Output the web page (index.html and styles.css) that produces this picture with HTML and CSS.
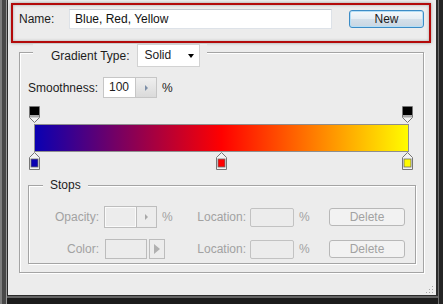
FILE: index.html
```html
<!DOCTYPE html>
<html lang="en">
<head>
    <meta charset="UTF-8">
    <title>Gradient Editor</title>
    <link rel="stylesheet" href="styles.css">
</head>
<body>
    <div class="window">
        <div class="panel">
            <div class="namebar">
                <label class="name-label" for="gradName">Name:</label>
                <input class="name-input" id="gradName" type="text" value="Blue, Red, Yellow">
                <button type="button" class="btn-new">New</button>
            </div>

            <div class="group gradient-group">
                <div class="legend type-legend">
                    <span>Gradient Type:</span>
                    <div class="select">Solid<span class="caret"></span></div>
                </div>

                <div class="smooth-row">
                    <span class="smooth-label">Smoothness:</span>
                    <div class="spin">
                        <span class="spin-value">100</span>
                        <span class="spin-btn"><span class="tri-small"></span></span>
                    </div>
                    <span class="pct">%</span>
                </div>

                <div class="editor">
                    <div class="track">
                        <svg class="marker" style="left: calc(0% - 5px)" width="11" height="18" viewBox="0 0 11 18">
                            <path d="M0.5 0.5 H10.5 V11.5 L5.5 16.5 L0.5 11.5 Z" fill="#f4f4f4" stroke="#767676"/>
                            <rect x="1" y="1" width="9" height="8" fill="#000"/>
                            <rect x="1" y="9" width="9" height="2.5" fill="#a9a9a9"/>
                        </svg>
                        <svg class="marker" style="left: calc(100% - 6px)" width="11" height="18" viewBox="0 0 11 18">
                            <path d="M0.5 0.5 H10.5 V11.5 L5.5 16.5 L0.5 11.5 Z" fill="#f4f4f4" stroke="#767676"/>
                            <rect x="1" y="1" width="9" height="8" fill="#000"/>
                            <rect x="1" y="9" width="9" height="2.5" fill="#a9a9a9"/>
                        </svg>
                    </div>
                    <div class="bar"></div>
                    <div class="track">
                        <svg class="marker" style="left: calc(0% - 5px)" width="11" height="18" viewBox="0 0 11 18">
                            <path d="M5.5 0.5 L10.5 5.5 V17.5 H0.5 V5.5 Z" fill="#f2f2f2" stroke="#767676"/>
                            <rect x="2" y="7" width="7" height="8" fill="#0a00b2" stroke="#6a6a6a" stroke-width="0.8"/>
                        </svg>
                        <svg class="marker" style="left: calc(50% - 5px)" width="11" height="18" viewBox="0 0 11 18">
                            <path d="M5.5 0.5 L10.5 5.5 V17.5 H0.5 V5.5 Z" fill="#f2f2f2" stroke="#767676"/>
                            <rect x="2" y="7" width="7" height="8" fill="#ff0000" stroke="#6a6a6a" stroke-width="0.8"/>
                        </svg>
                        <svg class="marker" style="left: calc(100% - 6px)" width="11" height="18" viewBox="0 0 11 18">
                            <path d="M5.5 0.5 L10.5 5.5 V17.5 H0.5 V5.5 Z" fill="#f2f2f2" stroke="#767676"/>
                            <rect x="2" y="7" width="7" height="8" fill="#fffc00" stroke="#6a6a6a" stroke-width="0.8"/>
                        </svg>
                    </div>
                </div>

                <div class="group stops-group">
                    <div class="legend stops-legend">Stops</div>

                    <div class="stop-row">
                        <span class="field-label">Opacity:</span>
                        <div class="spin disabled">
                            <span class="spin-value"></span>
                            <span class="spin-btn"><span class="tri-small"></span></span>
                        </div>
                        <span class="pct">%</span>
                        <span class="loc-label">Location:</span>
                        <span class="loc-input"></span>
                        <span class="pct loc-pct">%</span>
                        <button type="button" class="btn-delete" disabled>Delete</button>
                    </div>

                    <div class="stop-row color-row">
                        <span class="field-label">Color:</span>
                        <span class="swatch"></span>
                        <span class="swatch-btn"><span class="tri-big"></span></span>
                        <span class="spacer"></span>
                        <span class="loc-label">Location:</span>
                        <span class="loc-input"></span>
                        <span class="pct loc-pct">%</span>
                        <button type="button" class="btn-delete" disabled>Delete</button>
                    </div>
                </div>
            </div>

            <svg class="grip" width="8" height="9" viewBox="0 0 8 9">
                <rect x="6" y="1" width="1" height="1" fill="#a6a6a6"/>
                <rect x="3" y="4" width="1" height="1" fill="#a6a6a6"/>
                <rect x="6" y="4" width="1" height="1" fill="#a6a6a6"/>
                <rect x="0" y="7" width="1" height="1" fill="#a6a6a6"/>
                <rect x="3" y="7" width="1" height="1" fill="#a6a6a6"/>
                <rect x="6" y="7" width="1" height="1" fill="#a6a6a6"/>
            </svg>
        </div>
    </div>
</body>
</html>
```

FILE: styles.css
```css
body {
    margin: 0;
    font-family: "Liberation Sans", Arial, sans-serif;
    font-size: 12px;
    color: #1c1c1c;
    background: #ececec;
}
.window {
    width: 443px;
    height: 304px;
    box-sizing: border-box;
    display: flex;
    padding: 0 7px 8px 7px;
    background: #2c2c2c;
    box-shadow:
        inset 2px 0 #7e7e7e,
        inset 6px 0 #484848,
        inset 7px 0 #9a9a9a,
        inset -4px 0 #242424,
        inset -5px 0 #6e6e6e,
        inset 0 -6px #1c1c1c,
        inset 0 -8px #646464;
}
.panel {
    flex: 1;
    position: relative;
    background: #ececec;
    border-left: 1px solid #2a2a2a;
    border-bottom: 1px solid #2a2a2a;
}

/* name row */
.namebar {
    display: flex;
    align-items: flex-start;
    box-sizing: border-box;
    width: 420px;
    height: 40px;
    margin: 3px 0 0 3px;
    padding: 4px 0 0 6px;
    border: 2px solid #b30a0a;
    box-shadow: 0 0 3px rgba(0, 0, 0, 0.35), inset 0 0 3px rgba(0, 0, 0, 0.3);
}
.name-label {
    width: 50px;
    line-height: 20px;
}
.name-input {
    box-sizing: border-box;
    width: 263px;
    height: 20px;
    margin: 0;
    padding: 0 5px;
    font: inherit;
    color: #111;
    background: #fff;
    border: 1px solid #dde2e8;
    border-top-color: #c4c8cf;
    outline: none;
}
.btn-new {
    box-sizing: border-box;
    width: 75px;
    height: 18px;
    margin: 1px 0 0 17px;
    padding: 0;
    font: inherit;
    color: #1a1a1a;
    border: 1px solid #3c8cc6;
    border-radius: 3px;
    background: linear-gradient(#f4f8fb 0%, #e6eef4 48%, #d4e0ea 52%, #c9d6e2 100%);
    box-shadow: inset 0 0 0 1px #b4def6;
}

/* group boxes */
.group {
    box-sizing: border-box;
    border: 1px solid #a4a4a4;
    box-shadow: inset 1px 1px 0 #fff, 1px 1px 0 #fff;
}
.gradient-group {
    width: 405px;
    height: 221px;
    margin: 9px 0 0 11px;
}
.legend {
    background: #ececec;
}
.type-legend {
    display: inline-flex;
    align-items: center;
    gap: 7px;
    height: 23px;
    margin: -9px 0 0 13px;
    padding: 0 7px 0 18px;
    vertical-align: top;
}
.select {
    position: relative;
    box-sizing: border-box;
    width: 63px;
    height: 23px;
    line-height: 21px;
    padding-left: 7px;
    background: #fff;
    border: 1px solid #d2d2d2;
}
.caret {
    position: absolute;
    right: 5px;
    top: 9px;
    border-left: 3px solid transparent;
    border-right: 3px solid transparent;
    border-top: 4px solid #000;
}

/* smoothness */
.smooth-row {
    display: flex;
    align-items: center;
    height: 21px;
    margin: 10px 0 0 8px;
}
.smooth-label {
    width: 75px;
}
.spin {
    display: flex;
    box-sizing: border-box;
    width: 54px;
    height: 21px;
    border: 1px solid #c6c6c6;
}
.spin-value {
    box-sizing: border-box;
    width: 31px;
    padding-left: 5px;
    line-height: 19px;
    background: #fff;
}
.spin-btn {
    flex: 1;
    display: flex;
    align-items: center;
    justify-content: center;
    border-left: 1px solid #c6c6c6;
    background: linear-gradient(#efefef, #dadada);
}
.tri-small {
    border-top: 3px solid transparent;
    border-bottom: 3px solid transparent;
    border-left: 3px solid #7d8fa8;
}
.pct {
    width: 20px;
    margin-left: 5px;
}

/* gradient editor */
.editor {
    margin: 8px 0 0 14px;
    width: 374px;
}
.track {
    position: relative;
    height: 18px;
}
.marker {
    position: absolute;
    top: 0;
}
.bar {
    box-sizing: border-box;
    width: 375px;
    height: 28px;
    border: 1px solid #8e8e8e;
    background: linear-gradient(to right, #0a00b2 0%, #ff0000 50%, #fffc00 100%);
}

/* stops */
.stops-group {
    width: 388px;
    height: 79px;
    margin: 15px 0 0 8px;
    color: #a2a2a2;
}
.stops-legend {
    display: inline-block;
    height: 15px;
    line-height: 15px;
    margin: -8px 0 0 14px;
    padding: 0 7px;
    color: #1c1c1c;
    vertical-align: top;
}
.stop-row {
    display: flex;
    align-items: center;
    height: 22px;
    margin: 6px 0 0 0;
}
.color-row {
    margin-top: 10px;
}
.field-label {
    width: 70px;
    margin-right: 5px;
    text-align: right;
}
.spin.disabled {
    width: 53px;
    height: 22px;
    border-color: #bdbdbd;
}
.spin.disabled .spin-value {
    background: #ececec;
    box-shadow: inset 0 0 0 1px #fafafa;
}
.spin.disabled .spin-btn {
    background: #ececec;
    border-left-color: #bdbdbd;
}
.spin.disabled .tri-small {
    border-left-color: #a8a8a8;
}
.loc-label {
    width: 64px;
    margin-right: 4px;
    text-align: right;
}
.loc-input {
    box-sizing: border-box;
    width: 44px;
    height: 19px;
    border: 1px solid #c2c2c2;
    border-radius: 2px;
}
.loc-pct {
    width: 25px;
}
.btn-delete {
    box-sizing: border-box;
    width: 76px;
    height: 18px;
    margin-left: 5px;
    padding: 0;
    font: inherit;
    color: #a2a2a2;
    border: 1px solid #b8b8b8;
    border-radius: 3px;
    background: #f2f2f2;
}
.swatch {
    box-sizing: border-box;
    width: 42px;
    height: 20px;
    margin-left: 1px;
    border: 1px solid #bcbcbc;
}
.swatch-btn {
    display: flex;
    align-items: center;
    justify-content: center;
    box-sizing: border-box;
    width: 16px;
    height: 20px;
    margin-left: 2px;
    border: 1px solid #bcbcbc;
}
.tri-big {
    border-top: 5px solid transparent;
    border-bottom: 5px solid transparent;
    border-left: 6px solid #b0b0b0;
}
.spacer {
    width: 17px;
}
.grip {
    position: absolute;
    right: 2px;
    bottom: 1px;
}
```
